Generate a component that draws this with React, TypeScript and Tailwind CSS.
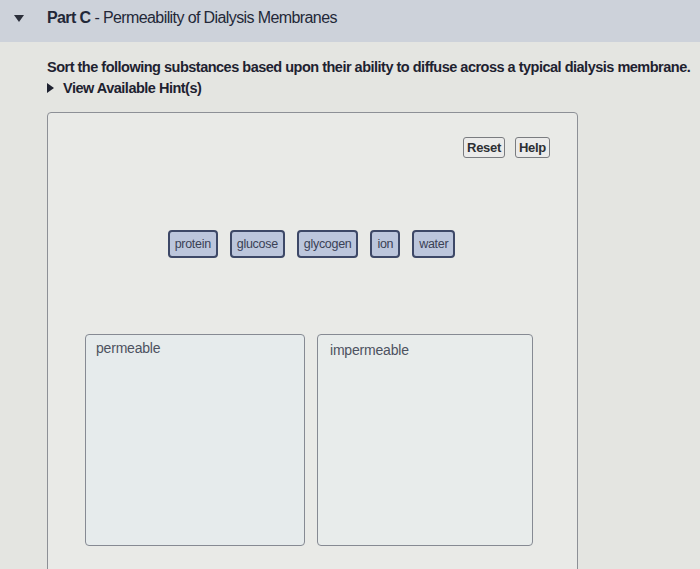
import React from "react";

const chips = ["protein", "glucose", "glycogen", "ion", "water"];

export default function App() {
  return (
    <div
      className="w-[700px] h-[569px] overflow-hidden bg-[#e4e5e1] text-[#222]"
      style={{ fontFamily: '"Liberation Sans", Arial, sans-serif' }}
    >
      <div className="h-[42px] bg-[#cdd2da] flex items-center pl-[14px] pb-[6px]">
        <svg width="10" height="7" viewBox="0 0 10 7" className="mr-[23px]">
          <polygon points="0,0 10,0 5,7" fill="#2b2f3a" />
        </svg>
        <span className="text-[16px] tracking-[-0.6px] text-[#232838]">
          <span className="font-bold">Part C</span> - Permeability of Dialysis Membranes
        </span>
      </div>
      <div className="pl-[47px] pt-[16px]">
        <p className="text-[14.5px] leading-[18px] font-bold tracking-[-0.5px] text-[#1e2230] whitespace-nowrap">
          Sort the following substances based upon their ability to diffuse across a typical dialysis membrane.
        </p>
        <div className="flex items-center mt-[3px]">
          <svg width="7" height="10" viewBox="0 0 7 10" className="mr-[9px]">
            <polygon points="0,0 7,5 0,10" fill="#1e2230" />
          </svg>
          <span className="text-[14.5px] leading-[18px] font-bold tracking-[-0.5px] text-[#1e2230]">View Available Hint(s)</span>
        </div>
        <div className="mt-[15px] w-[531px] h-[470px] border-[1.5px] border-[#8d9096] rounded-[4px] bg-[#e9eae7]">
          <div className="flex justify-end gap-[10px] pt-[24px] pr-[27px]">
            <button className="h-[21px] px-[3px] border-[1.5px] border-[#7a7c80] rounded-[3px] bg-[#ebebea] text-[13px] font-bold tracking-[-0.3px] text-[#2d2f33] leading-none">
              Reset
            </button>
            <button className="h-[21px] px-[3px] border-[1.5px] border-[#7a7c80] rounded-[3px] bg-[#ebebea] text-[13px] font-bold tracking-[-0.3px] text-[#2d2f33] leading-none">
              Help
            </button>
          </div>
          <div className="flex justify-center gap-[12px] mt-[72px] pr-[2px]">
            {chips.map((c) => (
              <div
                key={c}
                className="h-[28px] px-[5px] flex items-center border-2 border-[#3d4867] rounded-[4px] bg-[#bcc6dc] text-[12.5px] tracking-[-0.3px] text-[#3a4156]"
              >
                {c}
              </div>
            ))}
          </div>
          <div className="flex gap-[12px] mt-[76px] pl-[37px]">
            <div className="w-[220px] h-[212px] border-[1.5px] border-[#868a93] rounded-[4px] bg-[#e6ebec] px-[10px] pt-[3px] text-[14px] tracking-[-0.2px] text-[#4d5260]">
              permeable
            </div>
            <div className="w-[216px] h-[212px] border-[1.5px] border-[#868a93] rounded-[4px] bg-[#e8eceb] px-[12px] pt-[5px] text-[14px] tracking-[-0.2px] text-[#4d5260]">
              impermeable
            </div>
          </div>
        </div>
      </div>
    </div>
  );
}
